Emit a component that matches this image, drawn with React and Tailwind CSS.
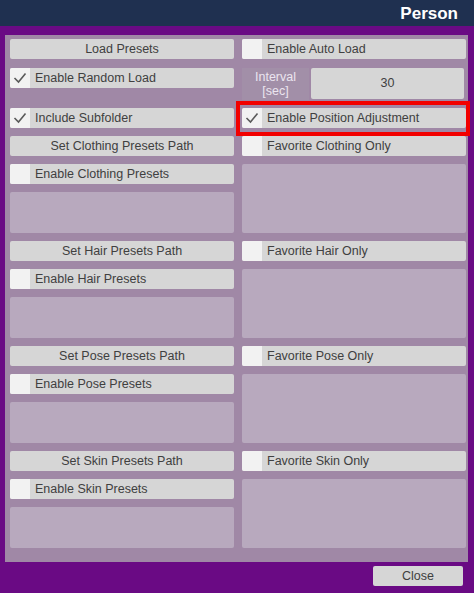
import React from 'react';

const font = { fontFamily: '"Liberation Sans", Arial, sans-serif' };

function Check() {
    return (
        <svg width="14" height="12" viewBox="0 0 14 12" fill="none">
            <polyline points="1.5,6 5.5,10 12.5,1.5" stroke="#5a5a5a" strokeWidth="1.6" fill="none" />
        </svg>
    );
}

function Button({ label, className = "" }) {
    return (
        <div className={"h-[20px] rounded-[2px] bg-[#d6d6d6] flex items-center justify-center text-[12.5px] text-[#404040] " + className}>
            {label}
        </div>
    );
}

function Toggle({ label, checked, className = "" }) {
    return (
        <div className={"h-[20px] rounded-[2px] bg-[#d6d6d6] flex items-center text-[12.5px] text-[#404040] " + className}>
            <div className="w-[20px] h-[20px] rounded-l-[2px] bg-[#f2f2f2] flex items-center justify-center">
                {checked && <Check />}
            </div>
            <span className="pl-[5px]">{label}</span>
        </div>
    );
}

function Box({ className = "" }) {
    return <div className={"rounded-[2px] bg-[#b8a9be] " + className} />;
}

const groups = ["Clothing", "Hair", "Pose", "Skin"];

export default function App() {
    return (
        <div style={font} className="w-[474px] h-[593px] bg-[#6a0a84] flex flex-col overflow-hidden">
            <div className="h-[26px] bg-[#1f3050] flex items-center justify-end pr-[16px]">
                <span className="text-white font-bold text-[17px] leading-none">Person</span>
            </div>

            <div className="mt-[9px] ml-[5px] mr-[6px] h-[527px] bg-[#a088a6] pt-[4px] pl-[5px] pr-[2px] flex gap-[8px]">
                {/* left column */}
                <div className="w-[224px] flex flex-col gap-[8px]">
                    <Button label="Load Presets" />
                    <Toggle label="Enable Random Load" checked className="mt-[1px]" />
                    <Toggle label="Include Subfolder" checked className="mt-[12px]" />
                    {groups.map((g) => (
                        <React.Fragment key={g}>
                            <Button label={`Set ${g} Presets Path`} />
                            <Toggle label={`Enable ${g} Presets`} />
                            <Box className="h-[41px]" />
                        </React.Fragment>
                    ))}
                </div>

                {/* right column */}
                <div className="w-[224px] flex flex-col gap-[8px]">
                    <Toggle label="Enable Auto Load" />
                    <div className="h-[32px] mt-[1px] flex">
                        <div className="w-[67px] bg-[#a28fa8] flex flex-col items-center justify-center text-[12.5px] leading-[14px] text-[#ebe5ef]">
                            <span>Interval</span>
                            <span>[sec]</span>
                        </div>
                        <div className="ml-[2px] w-[153px] h-[31px] rounded-[2px] bg-[#d6d6d6] flex items-center justify-center text-[12.5px] text-[#404040]">
                            30
                        </div>
                    </div>
                    <div className="relative">
                        <Toggle label="Enable Position Adjustment" checked />
                        <div className="absolute left-[-6px] right-[-4px] top-[-7px] bottom-[-8px] border-[4px] border-[#f20000]" />
                    </div>
                    {groups.map((g) => (
                        <React.Fragment key={g}>
                            <Toggle label={`Favorite ${g} Only`} />
                            <Box className="h-[69px]" />
                        </React.Fragment>
                    ))}
                </div>
            </div>

            <div className="mt-[4px] flex justify-end pr-[11px]">
                <div className="w-[90px] h-[20px] rounded-[2px] bg-[#d6d6d6] flex items-center justify-center text-[12.5px] text-[#404040]">
                    Close
                </div>
            </div>
        </div>
    );
}
